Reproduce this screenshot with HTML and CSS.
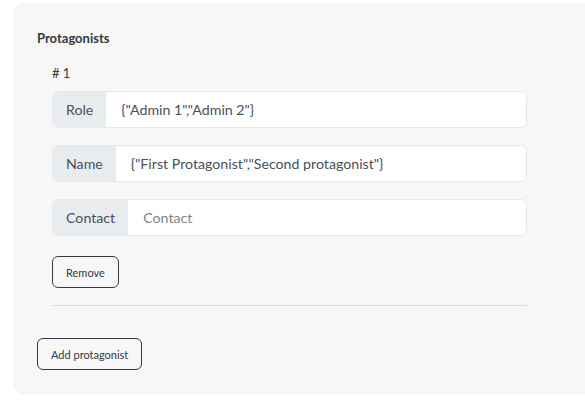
FILE: index.html
```html
<!DOCTYPE html>
<html>
<head>
<meta charset="utf-8">
<link rel="stylesheet" href="styles.css">
</head>
<body>
<div class="card">
  <h2 class="title">Protagonists</h2>
  <div class="item">
    <div class="num"># 1</div>
    <div class="group">
      <span class="addon">Role</span>
      <div class="control">{"Admin 1","Admin 2"}</div>
    </div>
    <div class="group">
      <span class="addon">Name</span>
      <div class="control">{"First Protagonist","Second protagonist"}</div>
    </div>
    <div class="group">
      <span class="addon">Contact</span>
      <div class="control placeholder">Contact</div>
    </div>
    <button class="btn btn-sm">Remove</button>
    <hr class="divider">
  </div>
  <button class="btn">Add protagonist</button>
</div>
</body>
</html>
```

FILE: styles.css
```css
html, body {
  margin: 0;
  padding: 0;
  background: #ffffff;
  overflow: hidden;
}
body {
  font-family: Lato, "Open Sans", sans-serif;
  color: #495057;
  padding: 3px 0 0 13px;
}
.card {
  background: #f7f7f7;
  border-radius: 12px 0 0 12px;
  padding: 26px 0 24px 24px;
  height: 392px;
  box-sizing: border-box;
}
.title {
  margin: 0;
  font-size: 13px;
  font-weight: 700;
  color: #333a40;
  line-height: 18px;
}
.item {
  margin-left: 15px;
  width: 475px;
  padding-top: 18px;
}
.num {
  font-size: 13px;
  line-height: 16px;
  color: #333a40;
  margin-bottom: 10px;
}
.group {
  display: flex;
  height: 37px;
  box-sizing: border-box;
  margin-bottom: 17px;
  border-radius: 6px;
  border: 1px solid #e8e8ec;
  background: #ffffff;
  overflow: hidden;
  font-size: 14.2px;
}
.addon {
  display: flex;
  align-items: center;
  background: #e9ecef;
  padding: 0 13px 0 13px;
  color: #495057;
}
.control {
  display: flex;
  align-items: center;
  padding-left: 15px;
  color: #495057;
  flex: 1;
}
.placeholder {
  color: #7c838a;
}
.btn {
  font-family: Lato, sans-serif;
  font-size: 11px;
  color: #333a40;
  background: transparent;
  border: 1px solid #343a40;
  border-radius: 6px;
  height: 32px;
  padding: 0 13px;
  cursor: pointer;
  display: block;
}
.btn-sm {
  height: 32px;
  padding: 0 13px;
  margin-top: 20px;
}
.divider {
  border: 0;
  border-top: 1px solid #dcdcdc;
  margin: 17px 0 32px 0;
}
```
